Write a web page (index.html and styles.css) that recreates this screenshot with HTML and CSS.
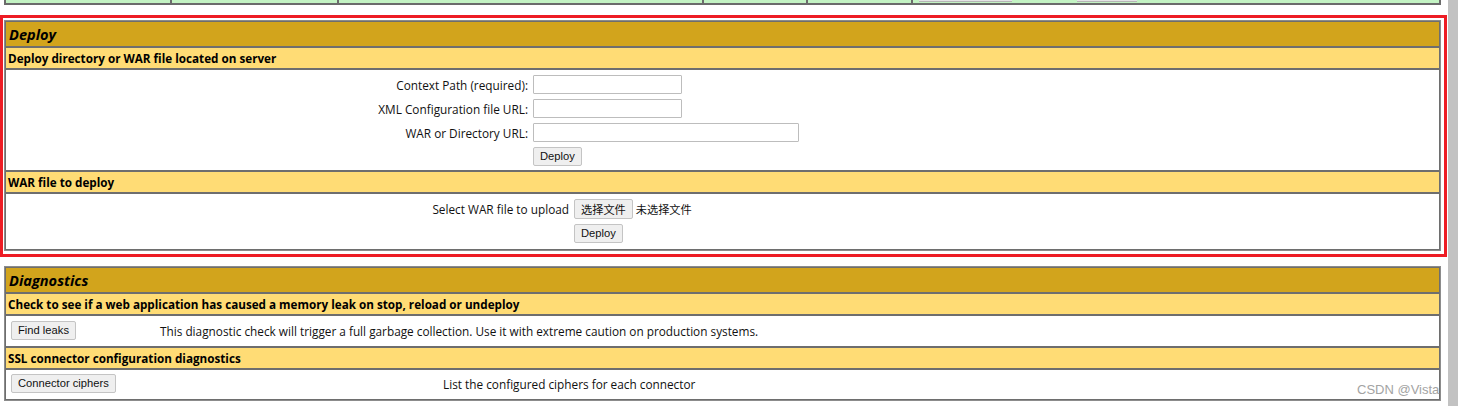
FILE: index.html
```html
<!DOCTYPE html>
<html lang="en">
<head>
<meta charset="utf-8">
<title>Tomcat Web Application Manager</title>
<link rel="stylesheet" href="styles.css">
</head>
<body>
<div class="page">
  <div class="main">
    <div class="strip">
      <div class="strip-cell c1"></div>
      <div class="strip-cell c2"></div>
      <div class="strip-cell c3"></div>
      <div class="strip-cell c4"></div>
      <div class="strip-cell c5"></div>
      <div class="strip-cell c6"><span class="btn-edge e1"></span><span class="btn-edge e2"></span></div>
    </div>

    <section class="panel highlight">
      <div class="cell title">Deploy</div>
      <div class="cell header">Deploy directory or WAR file located on server</div>
      <div class="cell body body-deploy">
        <form class="form-grid deploy-grid">
          <label class="lbl">Context Path (required):</label>
          <input class="txt short" type="text">
          <label class="lbl">XML Configuration file URL:</label>
          <input class="txt short" type="text">
          <label class="lbl">WAR or Directory URL:</label>
          <input class="txt long" type="text">
          <span class="lbl"></span>
          <button class="btn" type="button">Deploy</button>
        </form>
      </div>
      <div class="cell header">WAR file to deploy</div>
      <div class="cell body body-war">
        <form class="form-grid war-grid">
          <label class="lbl">Select WAR file to upload</label>
          <span class="file"><button class="btn file-btn" type="button">选择文件</button><span class="file-none">未选择文件</span></span>
          <span class="lbl"></span>
          <button class="btn" type="button">Deploy</button>
        </form>
      </div>
    </section>

    <section class="panel">
      <div class="cell title">Diagnostics</div>
      <div class="cell header">Check to see if a web application has caused a memory leak on stop, reload or undeploy</div>
      <div class="cell body body-diag">
        <div class="diag-row leaks">
          <button class="btn" type="button">Find leaks</button>
          <span>This diagnostic check will trigger a full garbage collection. Use it with extreme caution on production systems.</span>
        </div>
      </div>
      <div class="cell header">SSL connector configuration diagnostics</div>
      <div class="cell body body-diag last">
        <div class="diag-row ciphers">
          <button class="btn" type="button">Connector ciphers</button>
          <span>List the configured ciphers for each connector</span>
        </div>
      </div>
    </section>

    <div class="watermark">CSDN @Vista</div>
  </div>
  <div class="scrollbar"></div>
</div>
</body>
</html>
```

FILE: styles.css
```css
* {
  box-sizing: border-box;
}

html,
body {
  margin: 0;
  padding: 0;
  background: #fff;
}

body {
  font-family: "Open Sans", "Noto Sans CJK SC", sans-serif;
  font-size: 11.8px;
  color: #000;
}

.page {
  display: flex;
  height: 406px;
  overflow: hidden;
}

.main {
  position: relative;
  width: 1448px;
  flex: none;
  padding: 0 7px 0 4px;
}

.scrollbar {
  flex: 1;
  background: #c2c2c2;
}

/* tail of the application list above */
.strip {
  display: flex;
  height: 5px;
  background: #c3f3c3;
  border-left: 2px solid #6b6b6b;
  border-right: 2px solid #6b6b6b;
  border-bottom: 2px solid #6b6b6b;
}

.strip-cell {
  height: 100%;
  border-right: 2px solid #6b6b6b;
  flex: none;
}

.c1 { width: 166px; }
.c2 { width: 167px; }
.c3 { width: 365px; }
.c4 { width: 104px; }
.c5 { width: 105px; }

.c6 {
  flex: 1;
  border-right: none;
  display: flex;
  align-items: flex-start;
}

.btn-edge {
  display: block;
  height: 2px;
  background: #e4e4e4;
  border-bottom: 1px solid #b5b5b5;
}

.e1 {
  margin-left: 6px;
  width: 93px;
}

.e2 {
  margin-left: 65px;
  width: 60px;
}

/* panels */
.panel {
  margin-top: 15px;
  border: 1px solid #8c8c8c;
}

.highlight {
  position: relative;
}

.highlight::after {
  content: "";
  position: absolute;
  top: -6px;
  left: -5px;
  right: -7px;
  bottom: -7px;
  border: 3px solid #ed1c24;
  pointer-events: none;
}

.cell {
  border: 1px solid #6e6e6e;
}

.title {
  background: #d2a41c;
  font-style: italic;
  font-weight: 700;
  font-size: 14.6px;
  line-height: 18px;
  padding: 3px;
}

.header {
  background: #ffdc75;
  font-weight: 700;
  font-size: 11.7px;
  line-height: 14px;
  padding: 3px 3px 3px 2px;
}

.body {
  background: #fff;
}

.body-deploy {
  padding: 5px 3px 4px;
}

.body-war {
  padding: 5px 3px 6px;
}

.body-diag {
  padding: 5px;
  height: 32px;
}

.body-diag.last {
  height: 31px;
  padding-top: 4px;
}

.form-grid {
  margin: 0;
  display: grid;
  column-gap: 5px;
  row-gap: 5px;
  align-items: center;
  justify-content: start;
  color: #111;
}

.deploy-grid {
  grid-template-columns: 519px auto;
}

.war-grid {
  grid-template-columns: 560px auto;
}

.lbl {
  text-align: right;
  line-height: 16px;
}

.txt {
  display: block;
  height: 19px;
  margin: 0;
  padding: 0 2px;
  border: 1px solid #bdbdbd;
  border-radius: 1px;
  background: #fff;
  font: inherit;
}

.short {
  width: 149px;
}

.long {
  width: 266px;
}

.btn {
  display: block;
  height: 19px;
  margin: 0;
  padding: 0 6px;
  border: 1px solid #c4c4c4;
  border-radius: 2px;
  background: #efefef;
  font-family: "Liberation Sans", Arial, sans-serif;
  font-size: 11.2px;
  line-height: 17px;
  color: #111;
  justify-self: start;
}

.file {
  display: flex;
  align-items: center;
  gap: 3px;
}

.file-btn {
  height: 20px;
  padding: 0 6px;
  font-family: "Noto Sans CJK SC", sans-serif;
  font-size: 11.2px;
  line-height: 18px;
}

.file-none {
  font-family: "Noto Sans CJK SC", sans-serif;
  font-size: 11.2px;
}

.diag-row {
  display: grid;
  align-items: center;
  color: #111;
}

.leaks {
  grid-template-columns: 149px auto;
}

.ciphers {
  grid-template-columns: 432px auto;
}

.watermark {
  position: absolute;
  left: 1357px;
  top: 382px;
  font-family: "Liberation Sans", Arial, sans-serif;
  font-size: 13px;
  color: #a3a3a3;
  white-space: nowrap;
}
```
